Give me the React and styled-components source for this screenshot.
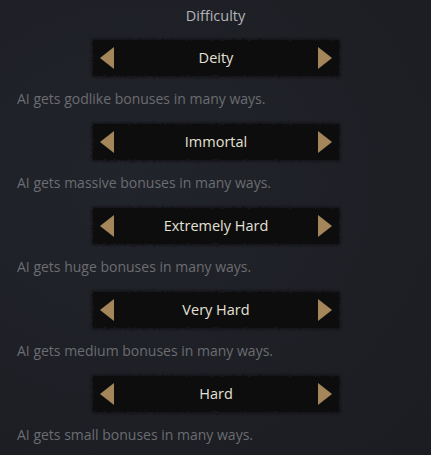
import React from 'react';
import styled, { createGlobalStyle } from 'styled-components';

const GlobalStyle = createGlobalStyle`
  html, body {
    margin: 0;
    padding: 0;
    background: #1d1f25;
  }
  body {
    font-family: "Open Sans", "Liberation Sans", sans-serif;
  }
`;

const Page = styled.div`
  width: 431px;
  height: 455px;
  box-sizing: border-box;
  padding-top: 6px;
  overflow: hidden;
  background: radial-gradient(ellipse at 30% 40%, #22242b 0%, #1d1f25 60%, #1b1d22 100%);
  display: flex;
  flex-direction: column;
`;

const Title = styled.div`
  text-align: center;
  font-size: 14.5px;
  line-height: 20px;
  color: #b4b4b6;
  margin-bottom: 14px;
`;

const List = styled.div`
  display: flex;
  flex-direction: column;
  gap: 15px;
`;

const Option = styled.div`
  display: flex;
  flex-direction: column;
  gap: 13px;
`;

const Selector = styled.div`
  position: relative;
  align-self: center;
  width: 246px;
  height: 36px;
  margin-left: 1px;
  display: flex;
  align-items: center;
  justify-content: space-between;
  padding: 0 7px;
  box-sizing: border-box;

  &::before {
    content: '';
    position: absolute;
    inset: 0;
    background: #0e0e10;
    box-shadow: 0 0 0 1px #15161a, 0 0 3px 1px rgba(8, 8, 10, 0.6);
    filter: url(#torn);
  }
`;

const Label = styled.span`
  position: relative;
  font-size: 14.5px;
  line-height: 20px;
  color: #e4e0d6;
`;

const Arrow = styled.svg`
  position: relative;
  width: 14px;
  height: 22px;
  display: block;
`;

const Description = styled.div`
  padding-left: 17px;
  font-size: 14px;
  line-height: 20px;
  color: #6b6d71;
`;

const ArrowLeft = () => (
  <Arrow viewBox="0 0 14 22">
    <polygon points="14,0 0,11 14,22" fill="#a5855a" />
  </Arrow>
);

const ArrowRight = () => (
  <Arrow viewBox="0 0 14 22">
    <polygon points="0,0 14,11 0,22" fill="#a5855a" />
  </Arrow>
);

const levels = [
  { name: 'Deity', text: 'AI gets godlike bonuses in many ways.' },
  { name: 'Immortal', text: 'AI gets massive bonuses in many ways.' },
  { name: 'Extremely Hard', text: 'AI gets huge bonuses in many ways.' },
  { name: 'Very Hard', text: 'AI gets medium bonuses in many ways.' },
  { name: 'Hard', text: 'AI gets small bonuses in many ways.' },
];

const App = () => (
  <>
    <GlobalStyle />
    <svg width="0" height="0" style={{ position: 'absolute' }}>
      <filter id="torn">
        <feTurbulence type="fractalNoise" baseFrequency="0.35" numOctaves="2" seed="3" />
        <feDisplacementMap in="SourceGraphic" scale="3" />
      </filter>
    </svg>
    <Page>
      <Title>Difficulty</Title>
      <List>
        {levels.map((lvl) => (
          <Option key={lvl.name}>
            <Selector>
              <ArrowLeft />
              <Label>{lvl.name}</Label>
              <ArrowRight />
            </Selector>
            <Description>{lvl.text}</Description>
          </Option>
        ))}
      </List>
    </Page>
  </>
);

export default App;
